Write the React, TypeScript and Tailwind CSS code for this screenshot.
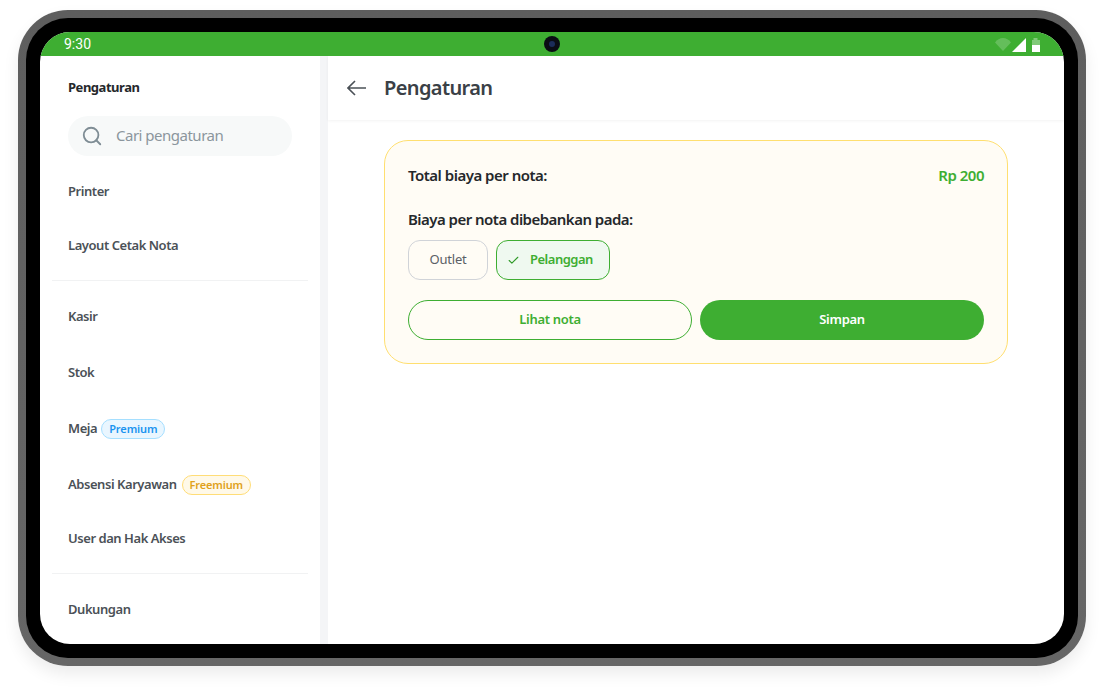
import { Check, Search } from "lucide-react";

const font = "font-['Noto_Sans','Open_Sans',sans-serif]";

const MenuItem = ({ label, className = "", children }: { label: string; className?: string; children?: React.ReactNode }) => (
  <div className={`flex items-center pl-7 text-[13px] font-semibold tracking-[-0.45px] text-[#4b5157] ${className}`}>
    <span>{label}</span>
    {children}
  </div>
);

const App = () => {
  return (
    <div className={`h-[692px] w-[1104px] overflow-hidden bg-white pl-[18px] pt-[10px] ${font}`}>
      {/* device frame */}
      <div className="h-[656px] w-[1068px] rounded-[50px] bg-gradient-to-b from-[#5e5e5e] to-[#666666] p-2 shadow-[0_8px_16px_rgba(0,0,0,0.08)]">
        <div className="h-full w-full rounded-[42px] bg-black px-[14px] py-[14px]">
          <div className="flex h-full w-full flex-col overflow-hidden rounded-[30px] bg-white">
            {/* status bar */}
            <div className="relative flex h-6 shrink-0 items-center justify-between bg-[#3eae32] pl-6 pr-[23px] text-white">
              <span className="font-['Roboto',sans-serif] text-[14px] leading-none">9:30</span>
              <span className="absolute left-[504px] top-1 h-4 w-4 rounded-full bg-[#0a0d14]">
                <span className="ml-[5px] mt-[5px] block h-[6px] w-[6px] rounded-full bg-[#1b2c59]" />
              </span>
              <svg width="48" height="16" viewBox="0 0 48 16" className="mt-[3px]">
                <path d="M2 4.500C6-1.500 14-1.500 18 4.500L10 13Z" fill="#fff" fillOpacity="0.2" />
                <path d="M19 14L33 0V14Z" fill="#fff" />
                <path d="M39 2h1.500V0h4V2H47V7H39Z" fill="#fff" fillOpacity="0.35" />
                <path d="M39 7H47V14H39Z" fill="#fff" />
              </svg>
            </div>

            <div className="flex min-h-0 flex-1">
              {/* sidebar */}
              <aside className="flex w-[280px] shrink-0 flex-col">
                <div className="pl-7 pt-[22px] text-[13px] font-bold leading-[18px] tracking-[-0.47px] text-[#25282b]">Pengaturan</div>
                <div className="ml-7 mt-5 flex h-10 w-[224px] items-center rounded-full bg-[#f7f9f9] pl-[13px]">
                  <Search size={22} strokeWidth={2} className="text-[#7f8d95]" />
                  <span className="ml-[13px] pb-0.5 text-[15px] tracking-[-0.5px] text-[#8b969d]">Cari pengaturan</span>
                </div>
                <MenuItem label="Printer" className="mt-[27px] h-[18px]" />
                <MenuItem label="Layout Cetak Nota" className="mt-9 h-[18px]" />
                <div className="mx-3 mt-[25px] h-px bg-[#f1f2f3]" />
                <MenuItem label="Kasir" className="mt-[27px] h-[18px]" />
                <MenuItem label="Stok" className="mt-[38px] h-[18px]" />
                <MenuItem label="Meja" className="mt-[38px] h-[18px]">
                  <span className="ml-1 flex h-5 items-center rounded-full border border-[#a5dfff] bg-[#e9f6ff] px-[7px] text-[11px] font-semibold tracking-[-0.1px] text-[#1a94f0]">Premium</span>
                </MenuItem>
                <MenuItem label="Absensi Karyawan" className="mt-[38px] h-[18px]">
                  <span className="ml-[5px] flex h-5 items-center rounded-full border border-[#ffdd77] bg-[#fff9e8] px-[7px] text-[11px] font-semibold tracking-[-0.15px] text-[#e0a11b]">Freemium</span>
                </MenuItem>
                <MenuItem label="User dan Hak Akses" className="mt-9 h-[18px]" />
                <div className="mx-3 mt-[25px] h-px bg-[#f1f2f3]" />
                <MenuItem label="Dukungan" className="mt-[27px] h-[18px]" />
              </aside>

              <div className="w-2 shrink-0 bg-[#f4f5f7]" />

              {/* main */}
              <main className="flex min-w-0 flex-1 flex-col">
                <header className="flex h-16 shrink-0 items-center pl-[19px] shadow-[0_1px_3px_rgba(0,0,0,0.05)]">
                  <svg width="19" height="16" viewBox="0 0 19 16" fill="none" stroke="#4b5157" strokeWidth="1.600">
                    <path d="M1 8H19M8 1L1 8L8 15" />
                  </svg>
                  <span className="ml-[18px] text-[20px] font-semibold tracking-[-0.62px] text-[#3a4046]">Pengaturan</span>
                </header>

                <section className="ml-14 mt-5 h-[224px] w-[624px] rounded-3xl border border-[#ffdf70] bg-[#fffcf5] px-[23px] pt-[22px]">
                  <div className="flex h-6 items-center justify-between text-[15px] font-semibold tracking-[-0.5px]">
                    <span className="text-[#25282b]">Total biaya per nota:</span>
                    <span className="text-[#3eae32]">Rp 200</span>
                  </div>
                  <div className="mt-5 h-6 text-[15px] font-semibold leading-6 tracking-[-0.53px] text-[#25282b]">Biaya per nota dibebankan pada:</div>
                  <div className="mt-[9px] flex gap-2">
                    <div className="flex h-10 w-20 items-center justify-center rounded-xl border border-[#d0d3d8] text-[13px] tracking-[-0.2px] text-[#5a6066]">Outlet</div>
                    <div className="flex h-10 w-[114px] items-center rounded-xl border border-[#3eae32] bg-[#eff9f0] pl-[10px] text-[13px] font-semibold tracking-[-0.5px] text-[#3eae32]">
                      <Check size={13} strokeWidth={2} className="text-[#2f9a28]" />
                      <span className="ml-[10px]">Pelanggan</span>
                    </div>
                  </div>
                  <div className="mt-5 flex gap-2">
                    <div className="flex h-10 w-[284px] items-center justify-center rounded-full border border-[#3eae32] text-[13px] font-semibold tracking-[-0.3px] text-[#3eae32]">Lihat nota</div>
                    <div className="flex h-10 w-[284px] items-center justify-center rounded-full bg-[#3eae32] text-[13px] font-semibold tracking-[-0.3px] text-white">Simpan</div>
                  </div>
                </section>
              </main>
            </div>
          </div>
        </div>
      </div>
    </div>
  );
};

export default App;
